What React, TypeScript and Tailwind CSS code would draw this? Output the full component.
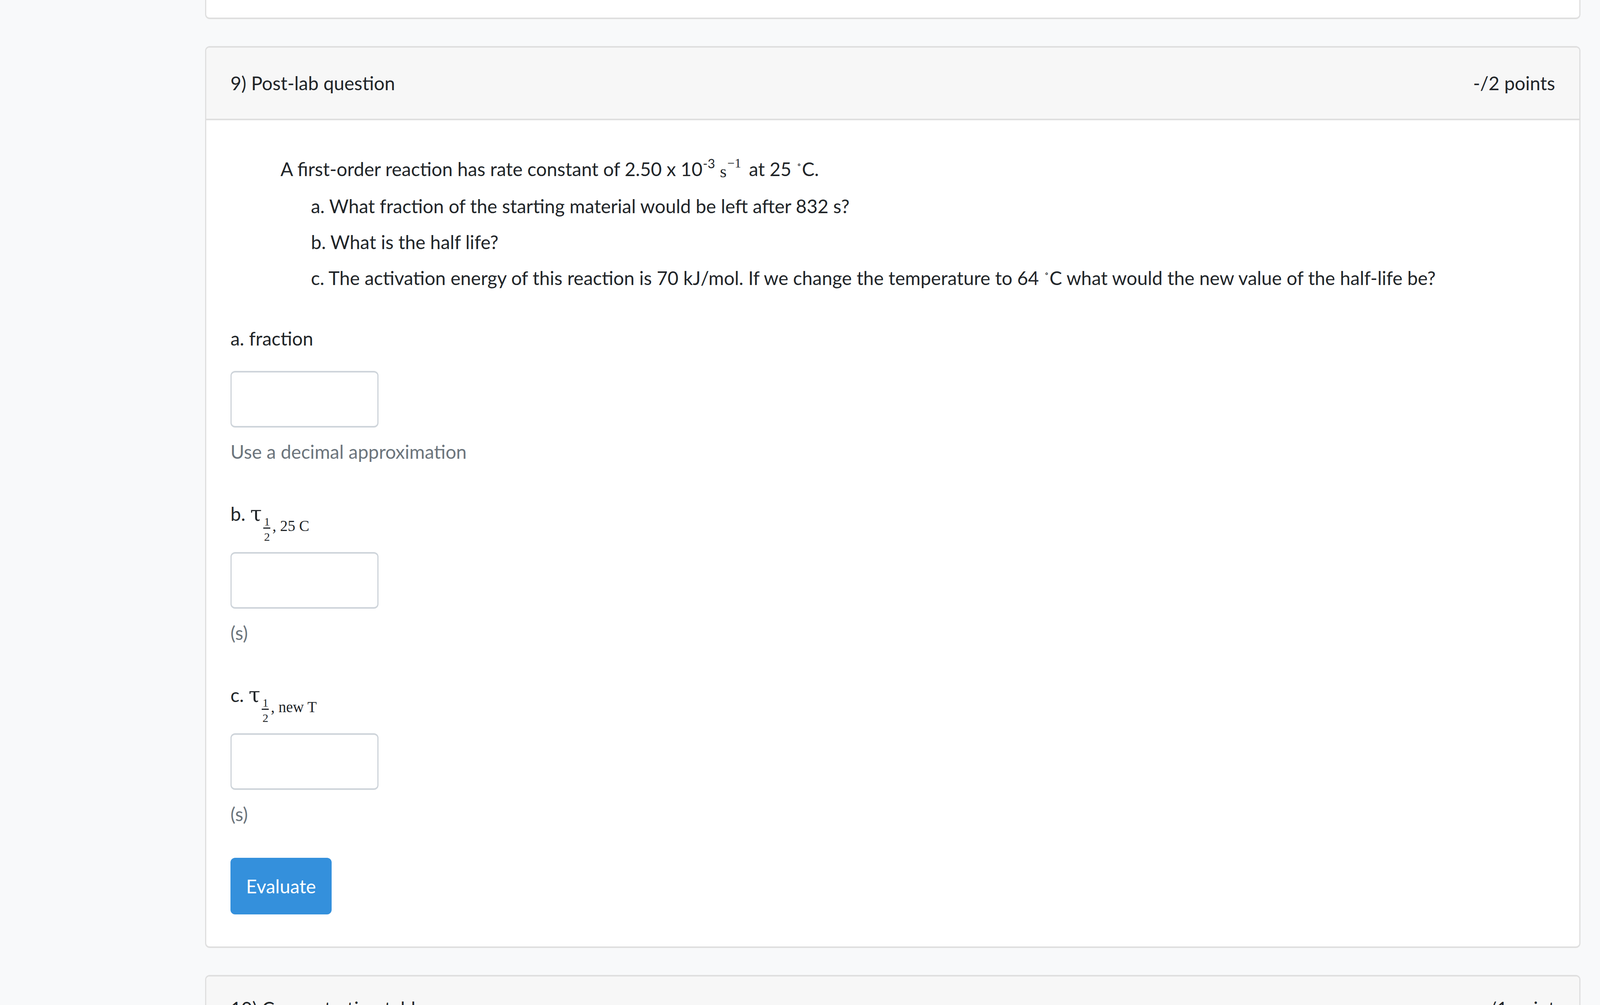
import React from "react";

const sans = "font-['Lato','Noto_Sans',sans-serif]";
const serif = "font-['Liberation_Serif','DejaVu_Serif',serif]";

const AnswerBox = () => (
  <input
    type="text"
    className="block w-[379px] h-[145px] bg-white border-x-[3px] border-y-[4px] border-[#ced4da] rounded-[12px] px-[37px] text-[48px] outline-none"
  />
);

const Degree = () => (
  <span className="font-['DejaVu_Serif',serif] relative -top-[22px] text-[22px] mx-[2px]">∘</span>
);

const TauLabel = ({ letter, sub }: { letter: string; sub: string }) => (
  <div className="h-[92px] whitespace-nowrap">
    <span>{letter}. </span>
    <span className="font-['DejaVu_Serif',serif] text-[54px] mr-[4px]">τ</span>
    <span className={`${serif} inline-flex flex-col items-center leading-none text-[30px] align-[-12px]`}>
      <span>1</span>
      <span className="block w-[18px] h-[3px] bg-[#212529]" />
      <span className="mt-[6px]">2</span>
    </span>
    <span className={`${serif} text-[39px] relative top-[26px] ml-[5px]`}>{sub}</span>
  </div>
);

const CardHeader = ({ title, points, top = "pt-[45px]" }: { title: string; points: string; top?: string }) => (
  <div className={`flex justify-between bg-[#f7f7f7] border-b-[4px] border-[#dfdfdf] px-[62px] ${top} pb-[45px]`}>
    <span>{title}</span>
    <span>{points}</span>
  </div>
);

export default function App() {
  return (
    <div className={`${sans} h-screen overflow-hidden bg-[#f8f9fa] text-[#212529] text-[48px] leading-[92px] pl-[525px] pr-[50px]`}>
      {/* tail of previous card */}
      <div className="h-[49px] bg-white border-x-[3px] border-b-[4px] border-[#dfdfdf] rounded-b-[12px]" />

      {/* question 9 */}
      <div className="mt-[69px] bg-white border-x-[3px] border-y-[4px] border-[#dfdfdf] rounded-[12px] overflow-hidden">
        <CardHeader title="9) Post-lab question" points="-/2 points" />

        <div className="px-[62px] pt-[79px] pb-[82px]">
          <div className="pl-[128px]">
            <div className="h-[95px] whitespace-nowrap">
              A first-order reaction has rate constant of 2.50 x 10
              <sup className="text-[33px] ml-[1px] -top-[20px]">-3</sup>{" "}
              <span className={`${serif} text-[44px] leading-none relative top-[3px]`}>
                s<sup className="text-[33px] ml-[2px] -top-[25px]">−1</sup>
              </span>
              <span className="ml-[20px]">at 25</span> <Degree />C.
            </div>
            <div className="pl-[78px]">
              <div className="h-[92px]">a. What fraction of the starting material would be left after 832 s?</div>
              <div className="h-[92px]">b. What is the half life?</div>
              <div className="h-[92px] whitespace-nowrap">
                c. The activation energy of this reaction is 70 kJ/mol. If we change the temperature to 64 <Degree />C
                what would the new value of the half-life be?
              </div>
            </div>
          </div>

          <div className="mt-[63px] h-[92px]">a. fraction</div>
          <div className="mt-[37px]">
            <AnswerBox />
          </div>
          <div className="mt-[16px] h-[92px] text-[#6c757d]">Use a decimal approximation</div>

          <div className="mt-[67px]">
            <TauLabel letter="b" sub=", 25 C" />
          </div>
          <div className="mt-[52px]">
            <AnswerBox />
          </div>
          <div className="mt-[16px] h-[92px] text-[#6c757d]">(s)</div>

          <div className="mt-[67px]">
            <TauLabel letter="c" sub=", new T" />
          </div>
          <div className="mt-[52px]">
            <AnswerBox />
          </div>
          <div className="mt-[16px] h-[92px] text-[#6c757d]">(s)</div>

          <button className="mt-[66px] w-[259px] h-[145px] bg-[#3490dc] text-white rounded-[12px] flex items-center justify-center">
            Evaluate
          </button>
        </div>
      </div>

      {/* question 10 */}
      <div className="mt-[69px] bg-white border-x-[3px] border-y-[4px] border-[#dfdfdf] rounded-[12px] overflow-hidden">
        <CardHeader title="10) Concentration table" points="-/1 point" top="pt-[36px]" />
        <div className="h-[500px]" />
      </div>
    </div>
  );
}
